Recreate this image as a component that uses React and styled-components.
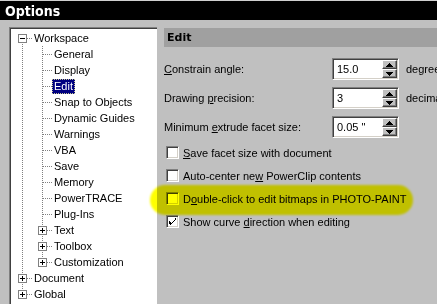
import React from 'react';
import styled, { createGlobalStyle } from 'styled-components';

const GlobalStyle = createGlobalStyle`
  html, body { margin: 0; padding: 0; background: #c0c0c0; }
  body { font-family: "Liberation Sans", Arial, sans-serif; font-size: 11px; color: #000; }
  * { box-sizing: border-box; }
`;

const Window = styled.div`
  position: relative;
  width: 437px;
  height: 304px;
  overflow: hidden;
  background: #c0c0c0;
  display: flex;
  flex-direction: column;
`;

const TitleBar = styled.div`
  flex: none;
  height: 20px;
  border-top: 1px solid #d0d0d0;
  background: #000;
  color: #fff;
  font-family: "Liberation Sans Narrow", "DejaVu Sans Condensed", "Liberation Sans", sans-serif;
  font-weight: bold;
  font-size: 14px;
  display: flex;
  align-items: center;
  padding-left: 5px;
`;

const Body = styled.div`
  flex: 1;
  min-height: 0;
  display: flex;
  padding-top: 7px;
`;

const TreePanel = styled.div`
  flex: none;
  margin-left: 9px;
  width: 148px;
  height: 300px;
  background: #fff;
  border-top: 1px solid #808080;
  border-left: 1px solid #808080;
  box-shadow: inset 1px 1px #404040;
  padding-top: 2px;
`;

const TreeRow = styled.div`
  display: flex;
  align-items: center;
  height: 16px;
  padding-left: 2px;
`;

const Cell = styled.svg`
  display: block;
  flex: none;
  width: 20px;
  height: 16px;
  shape-rendering: crispEdges;
`;

const Label = styled.span`
  display: block;
  height: 15px;
  line-height: 15px;
  padding: 0 2px;
  white-space: nowrap;
  background: ${p => (p.$selected ? '#000080' : 'transparent')};
  color: ${p => (p.$selected ? '#fff' : '#000')};
  outline: ${p => (p.$selected ? '1px dotted #c8c890' : 'none')};
  outline-offset: -1px;
`;

const RightPane = styled.div`
  flex: 1;
  min-width: 0;
  margin-left: 7px;
  display: flex;
  flex-direction: column;
`;

const Header = styled.div`
  margin-top: 1px;
  height: 19px;
  line-height: 19px;
  background: #a0a0a0;
  padding-left: 3px;
  font-family: "DejaVu Sans", sans-serif;
  font-weight: bold;
  font-size: 11px;
`;

const Form = styled.div`
  display: flex;
  flex-direction: column;
  padding-top: 11px;
`;

const FieldRow = styled.div`
  display: flex;
  align-items: center;
  height: 22px;
  margin-top: ${p => p.$gap || 0}px;
  white-space: nowrap;
`;

const FieldLabel = styled.span`
  flex: none;
  width: 168px;
`;

const SpinBox = styled.div`
  flex: none;
  width: 67px;
  height: 22px;
  display: flex;
  background: #fff;
  border: 1px solid;
  border-color: #808080 #fff #fff #808080;
  box-shadow: inset 1px 1px #404040, inset -1px -1px #d4d0c8;
  padding: 1px;
`;

const SpinValue = styled.span`
  flex: 1;
  padding-left: 3px;
  line-height: 18px;
`;

const SpinButtons = styled.div`
  flex: none;
  width: 15px;
  display: flex;
  flex-direction: column;
`;

const SpinButton = styled.div`
  flex: 1;
  display: flex;
  align-items: center;
  justify-content: center;
  background: #c0c0c0;
  border: 1px solid;
  border-color: #fff #404040 #404040 #fff;
  box-shadow: inset -1px -1px #808080;
`;

const Arrow = styled.svg`
  display: block;
  width: 7px;
  height: 4px;
  shape-rendering: crispEdges;
`;

const Unit = styled.span`
  flex: none;
  margin-left: 7px;
`;

const CheckRow = styled.div`
  display: flex;
  align-items: center;
  height: 23px;
  padding-left: 2px;
  margin-top: ${p => p.$gap || 0}px;
  white-space: nowrap;
`;

const CheckBox = styled.span`
  flex: none;
  width: 13px;
  height: 13px;
  background: #fff;
  border: 1px solid;
  border-color: #808080 #fff #fff #808080;
  box-shadow: inset 1px 1px #404040, inset -1px -1px #d4d0c8;
  display: flex;
  align-items: center;
  justify-content: center;
`;

const CheckLabel = styled.span`
  margin-left: 4px;
`;

const Highlight = styled.div`
  position: absolute;
  left: 150px;
  top: 185px;
  width: 263px;
  height: 30px;
  border-radius: 15px;
  background: #ffff00;
  mix-blend-mode: multiply;
  filter: blur(1.2px);
  pointer-events: none;
`;

const DOT = { stroke: '#808080', strokeDasharray: '1 1' };

function GuideCell({ on }) {
  return (
    <Cell viewBox="0 0 20 16">
      {on && <line x1="10.5" y1="0" x2="10.5" y2="16" stroke={DOT.stroke} strokeDasharray={DOT.strokeDasharray} />}
    </Cell>
  );
}

function ConnectorCell({ top, bottom, toggle }) {
  return (
    <Cell viewBox="0 0 20 16">
      {top && <line x1="10.5" y1="0" x2="10.5" y2="8" stroke={DOT.stroke} strokeDasharray={DOT.strokeDasharray} />}
      {bottom && <line x1="10.5" y1="8" x2="10.5" y2="16" stroke={DOT.stroke} strokeDasharray={DOT.strokeDasharray} />}
      <line x1="11" y1="8.5" x2="20" y2="8.5" stroke={DOT.stroke} strokeDasharray={DOT.strokeDasharray} />
      {toggle && (
        <g>
          <rect x="6.5" y="4.5" width="8" height="8" fill="#fff" stroke="#808080" />
          <line x1="8" y1="8.5" x2="13" y2="8.5" stroke="#000" />
          {toggle === '+' && <line x1="10.5" y1="6" x2="10.5" y2="11" stroke="#000" />}
        </g>
      )}
    </Cell>
  );
}

const L1 = (label, extra = {}) => ({ label, guides: [true], top: true, bottom: true, toggle: null, ...extra });

const tree = [
  { label: 'Workspace', guides: [], top: false, bottom: true, toggle: '-' },
  L1('General'),
  L1('Display'),
  L1('Edit', { selected: true }),
  L1('Snap to Objects'),
  L1('Dynamic Guides'),
  L1('Warnings'),
  L1('VBA'),
  L1('Save'),
  L1('Memory'),
  L1('PowerTRACE'),
  L1('Plug-Ins'),
  L1('Text', { toggle: '+' }),
  L1('Toolbox', { toggle: '+' }),
  L1('Customization', { toggle: '+', bottom: false }),
  { label: 'Document', guides: [], top: true, bottom: true, toggle: '+' },
  { label: 'Global', guides: [], top: true, bottom: false, toggle: '+' },
];

function Spin({ value }) {
  return (
    <SpinBox>
      <SpinValue>{value}</SpinValue>
      <SpinButtons>
        <SpinButton>
          <Arrow viewBox="0 0 7 4"><path d="M3 0h1v1h1v1h1v1h1v1H0V3h1V2h1V1h1z" fill="#000" /></Arrow>
        </SpinButton>
        <SpinButton>
          <Arrow viewBox="0 0 7 4"><path d="M0 0h7v1H6v1H5v1H4v1H3V3H2V2H1V1H0z" fill="#000" /></Arrow>
        </SpinButton>
      </SpinButtons>
    </SpinBox>
  );
}

function Check({ checked, children, gap }) {
  return (
    <CheckRow $gap={gap}>
      <CheckBox>
        {checked && (
          <svg width="7" height="7" viewBox="0 0 7 7" shapeRendering="crispEdges">
            <path d="M6 0h1v2H6v1H5v1H4v1H3v1H2v1H1V6H0V3h1v1h1v1h1V4h1V3h1V2h1z" fill="#000" />
          </svg>
        )}
      </CheckBox>
      <CheckLabel>{children}</CheckLabel>
    </CheckRow>
  );
}

export default function App() {
  return (
    <>
      <GlobalStyle />
      <Window>
        <TitleBar>Options</TitleBar>
        <Body>
          <TreePanel>
            {tree.map(n => (
              <TreeRow key={n.label}>
                {n.guides.map((g, i) => <GuideCell key={i} on={g} />)}
                <ConnectorCell top={n.top} bottom={n.bottom} toggle={n.toggle} />
                <Label $selected={n.selected}>{n.label}</Label>
              </TreeRow>
            ))}
          </TreePanel>
          <RightPane>
            <Header>Edit</Header>
            <Form>
              <FieldRow>
                <FieldLabel><u>C</u>onstrain angle:</FieldLabel>
                <Spin value="15.0" />
                <Unit>degrees</Unit>
              </FieldRow>
              <FieldRow $gap={7}>
                <FieldLabel>Drawing <u>p</u>recision:</FieldLabel>
                <Spin value="3" />
                <Unit>decimal places</Unit>
              </FieldRow>
              <FieldRow $gap={7}>
                <FieldLabel>Minimum <u>e</u>xtrude facet size:</FieldLabel>
                <Spin value={'0.05 "'} />
              </FieldRow>
              <Check gap={3}><u>S</u>ave facet size with document</Check>
              <Check>Auto-center ne<u>w</u> PowerClip contents</Check>
              <Check>D<u>o</u>uble-click to edit bitmaps in PHOTO-PAINT</Check>
              <Check checked>Show curve <u>d</u>irection when editing</Check>
            </Form>
          </RightPane>
        </Body>
        <Highlight />
      </Window>
    </>
  );
}
